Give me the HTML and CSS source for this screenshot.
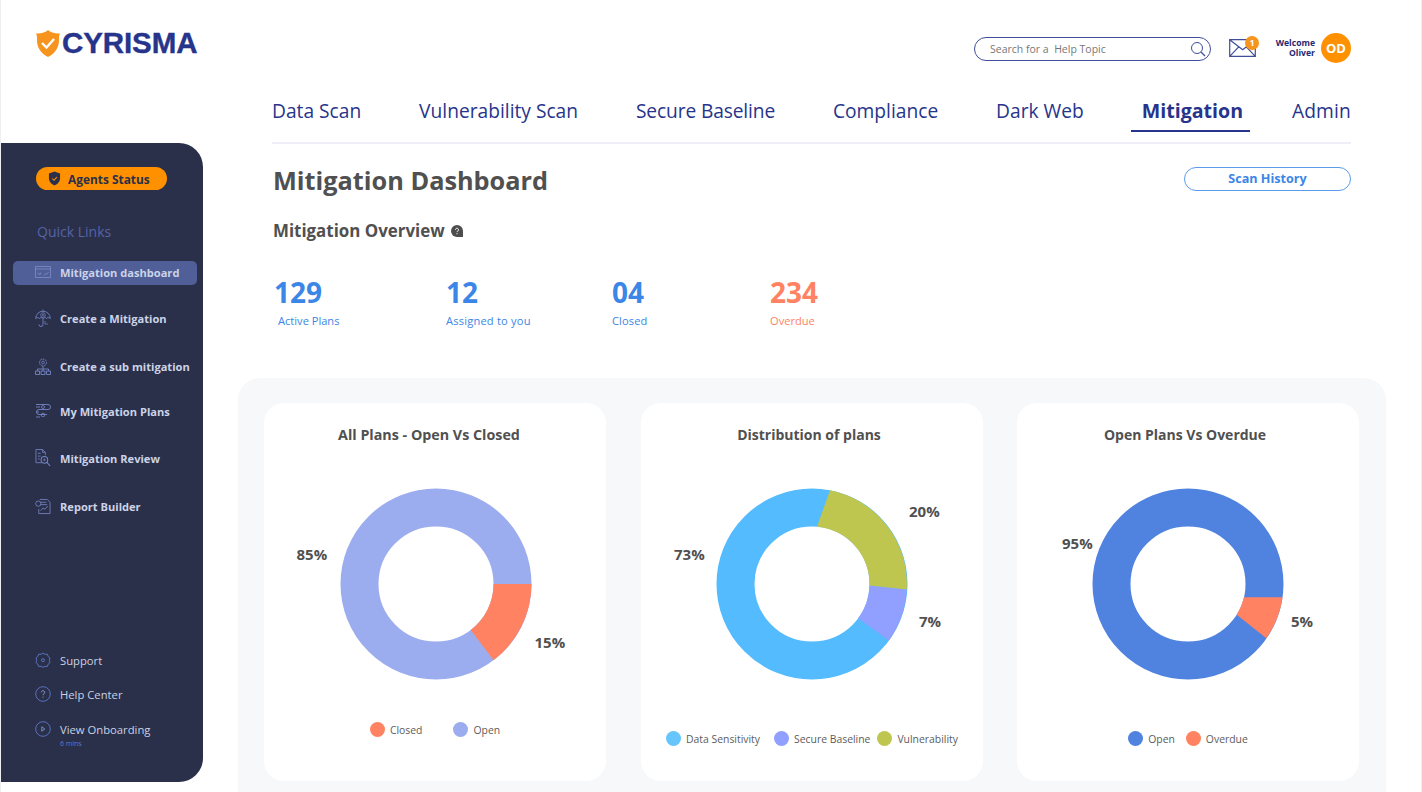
FILE: index.html
```html
<!DOCTYPE html>
<html lang="en">
<head>
<meta charset="utf-8">
<title>Mitigation Dashboard</title>
<link rel="stylesheet" href="styles.css">
</head>
<body>
<div class="page">
  <header class="top">
    <div class="logo">
      <svg class="shield" viewBox="0 0 24 27" width="24" height="27"><path d="M12 0c2.500 2.500 6.500 3.800 12 3.500-.8 1.500-1.200 3-1 5.500.4 8-3.500 14-11 18C4.500 23 .6 17 1 9c.2-2.500-.2-4-1-5.500C5.500 3.800 9.500 2.500 12 0z" fill="#f7941d"/><path d="M6 13l4.500 4.500L18 9" fill="none" stroke="#fff" stroke-width="2.400"/></svg>
      <span class="logo-text">CYRISMA</span>
    </div>
    <div class="top-right">
      <div class="search">
        <span>Search for a&nbsp; Help Topic</span>
        <svg viewBox="0 0 16 16" width="16" height="16"><circle cx="7" cy="7" r="5.500" fill="none" stroke="#3f4d9b" stroke-width="1"/><path d="M11 11l4 4" stroke="#3f4d9b" stroke-width="1.200"/></svg>
      </div>
      <div class="mail">
        <svg viewBox="0 0 27 18" width="27" height="18"><path d="M.7.7h25.600v16.600H.7zM.7.700l13 10 12.600-10M.7 17.300l9-9.500M26.300 17.300l-9-9.500" fill="none" stroke="#3f4d9b" stroke-width="1.200"/></svg>
        <span class="badge">1</span>
      </div>
      <div class="welcome">Welcome<br>Oliver</div>
      <div class="avatar">OD</div>
    </div>
  </header>
  <nav class="tabs">
    <a>Data Scan</a><a>Vulnerability Scan</a><a class="tight">Secure Baseline</a><a>Compliance</a><a>Dark Web</a><a class="active">Mitigation</a><a>Admin</a>
  </nav>
  <div class="body">
    <aside class="side">
      <div class="agents">
        <svg viewBox="0 0 14 16" width="13" height="15"><path d="M7 .5l6 2v5c0 4-2.500 6.500-6 8-3.500-1.500-6-4-6-8v-5z" fill="#2a3049"/><path d="M4.500 8l2 2 3-3.500" fill="none" stroke="#ff9100" stroke-width="1.100"/></svg>
        <span>Agents Status</span>
      </div>
      <div class="quick">Quick Links</div>
      <ul class="links">
        <li class="current l0"><svg viewBox="0 0 16 12" width="16" height="12"><path d="M.5.500h15v11H.5zM.5 3h15M3 7a1.500 1.500 0 1 0 3 0H4.500M9 9.500l1.500-2 1 1 2-2.500" fill="none" stroke="#7f8dc9" stroke-width=".8"/></svg><span>Mitigation dashboard</span></li>
        <li class="l1"><svg viewBox="0 0 16 20" width="16" height="20"><path d="M.7 10.500a7.300 7.300 0 0 1 14.600 0c-1.500-1.200-3-1.200-3.700 0-.9-1.200-2.700-1.200-3.600 0-.9-1.200-2.700-1.200-3.600 0-.7-1.200-2.200-1.200-3.700 0zM8 3.200V1.500M8 10.500v6a2 2 0 0 1-4 0" fill="none" stroke="#7584c4" stroke-width=".9"/><circle cx="8" cy="7" r="2.300" fill="none" stroke="#7584c4" stroke-width=".7"/><path d="M6.800 7h2.400M8 5.800v2.400M10 13v3h3" fill="none" stroke="#7584c4" stroke-width=".7"/></svg><span>Create a Mitigation</span></li>
        <li class="l2"><svg viewBox="0 0 16 17" width="16" height="17"><circle cx="8" cy="4.500" r="3.500" fill="none" stroke="#7584c4" stroke-width=".9" stroke-dasharray="2 .6"/><circle cx="8" cy="4.500" r="1.400" fill="none" stroke="#7584c4" stroke-width=".8"/><path d="M8 8v3M2.500 13v-2h11v2M.5 13h4v3.500h-4zM6 13h4v3.500H6zM11.500 13h4v3.500h-4zM8 11v2" fill="none" stroke="#7584c4" stroke-width=".9"/></svg><span>Create a sub mitigation</span></li>
        <li class="l3"><svg viewBox="0 0 16 16" width="16" height="16"><path d="M3 1.500h10a2.500 2.500 0 0 1 0 5H4a2.500 2.500 0 0 0 0 5h8M1 1.500h3M1 4h4M1 9h3M1 14h4" fill="none" stroke="#7584c4" stroke-width=".9"/><circle cx="8" cy="4" r="1.500" fill="none" stroke="#7584c4" stroke-width=".8"/><circle cx="8" cy="12" r="1.800" fill="none" stroke="#7584c4" stroke-width=".8"/></svg><span>My Mitigation Plans</span></li>
        <li class="l4"><svg viewBox="0 0 17 20" width="17" height="20"><path d="M7 15H1V1h7l3 3v3M8 1v3h3M3 5h3M3 8h3M3 11h2" fill="none" stroke="#7584c4" stroke-width=".9"/><circle cx="10" cy="12" r="3.500" fill="#2a3049" stroke="#7584c4" stroke-width="1.100"/><path d="M8.500 12h3M10 10.500v3" stroke="#7584c4" stroke-width=".7"/><path d="M12.500 14.500l3.500 4" stroke="#7584c4" stroke-width="1.200"/></svg><span>Mitigation Review</span></li>
        <li class="l5"><svg viewBox="0 0 17 17" width="17" height="17"><path d="M5 1h8l3 3v12H4v-5M6 4h6M6 6.500h7M6 13l2.500-3 2 1.500 3-3.500" fill="none" stroke="#7584c4" stroke-width=".9"/><circle cx="3.500" cy="5.500" r="2.800" fill="none" stroke="#7584c4" stroke-width=".9"/></svg><span>Report Builder</span></li>
      </ul>
      <ul class="foot">
        <li class="f0"><svg viewBox="0 0 16 16" width="16" height="16"><path d="M8 1l2 1.300 2.400-.1.800 2.300 1.800 1.500-.7 2.300.7 2.300-1.800 1.500-.8 2.300-2.400-.1L8 15.400l-2-1.100-2.400.1-.8-2.300L1 10.600l.7-2.300L1 6l1.800-1.500.8-2.300 2.400.1z" fill="none" stroke="#5f77c9" stroke-width=".9"/><circle cx="8" cy="8.200" r="1.500" fill="none" stroke="#5f77c9" stroke-width=".9"/></svg><span>Support</span></li>
        <li class="f1"><svg viewBox="0 0 16 16" width="16" height="16"><circle cx="8" cy="8" r="7.300" fill="none" stroke="#5f77c9" stroke-width=".9"/><path d="M6.300 6.300a1.700 1.700 0 1 1 2.600 1.500c-.6.400-.9.700-.9 1.400M8 10.700v1" fill="none" stroke="#8ea2e0" stroke-width=".9"/></svg><span>Help Center</span></li>
        <li class="f2"><svg viewBox="0 0 16 16" width="16" height="16"><circle cx="8" cy="8" r="7.300" fill="none" stroke="#5f77c9" stroke-width=".9"/><path d="M6.800 5.800l3 2.200-3 2.200z" fill="none" stroke="#8ea2e0" stroke-width=".8"/></svg><div><span>View Onboarding</span><small>6 mins</small></div></li>
      </ul>
    </aside>
    <main class="main">
      <div class="title-row">
        <h1>Mitigation Dashboard</h1>
        <button class="history">Scan History</button>
      </div>
      <h2>Mitigation Overview <svg viewBox="0 0 12 12" width="12" height="12"><path d="M6 0a6 6 0 0 1 6 6v6H6A6 6 0 0 1 6 0z" fill="#4d4d4d"/><path d="M4.500 4.700a1.500 1.500 0 1 1 2.300 1.300c-.5.300-.8.500-.8 1.100M6 8.200v1" fill="none" stroke="#fff" stroke-width="1"/></svg></h2>
      <div class="stats">
        <div class="stat s1"><b>129</b><span>Active Plans</span></div>
        <div class="stat s2"><b>12</b><span>Assigned to you</span></div>
        <div class="stat s3"><b>04</b><span>Closed</span></div>
        <div class="stat s4 over"><b>234</b><span>Overdue</span></div>
      </div>
      <section class="panel">
        <article class="card c1">
          <h3>All Plans - Open Vs Closed</h3>
          <div class="chart">
            <svg viewBox="0 0 192 192" width="192" height="192"><circle cx="96" cy="96" r="76.500" class="ring" stroke="#9cadef"/><circle cx="96" cy="96" r="76.500" class="ring" stroke="#ff8263" pathLength="100" stroke-dasharray="14.700 85.300"/></svg>
            <span class="pct p-a1">85%</span><span class="pct p-a2">15%</span>
          </div>
          <div class="legend lg-a"><i class="c-or"></i><span>Closed</span><i class="c-pe"></i><span>Open</span></div>
        </article>
        <article class="card c2">
          <h3>Distribution of plans</h3>
          <div class="chart">
            <svg viewBox="0 0 192 192" width="192" height="192"><circle cx="96" cy="96" r="76.500" class="ring" stroke="#54bbff"/><path d="M190.700 101.500A95.500 95.500 0 0 1 172.800 152.500L142.200 130.200A57.500 57.500 0 0 0 153.500 97.500Z" fill="#919ffe"/><path d="M114 2.200A95.500 95.500 0 0 1 190.700 101.500L153.500 97.500A57.500 57.500 0 0 0 101 38.700Z" fill="#bfc650"/></svg>
            <span class="pct p-b1">73%</span><span class="pct p-b2">20%</span><span class="pct p-b3">7%</span>
          </div>
          <div class="legend lg-b"><i class="c-sk"></i><span>Data Sensitivity</span><i class="c-vi"></i><span>Secure Baseline</span><i class="c-ol"></i><span>Vulnerability</span></div>
        </article>
        <article class="card c3">
          <h3>Open Plans Vs Overdue</h3>
          <div class="chart">
            <svg viewBox="0 0 192 192" width="192" height="192"><circle cx="96" cy="96" r="76.500" class="ring" stroke="#5083df"/><path d="M152 109.200H190.600A95.500 95.500 0 0 1 174.400 150.200L144.700 126.700A57.500 57.500 0 0 0 152 109.200Z" fill="#ff8263"/></svg>
            <span class="pct p-c1">95%</span><span class="pct p-c2">5%</span>
          </div>
          <div class="legend lg-c"><i class="c-bl"></i><span>Open</span><i class="c-or"></i><span>Overdue</span></div>
        </article>
      </section>
    </main>
  </div>
</div>
</body>
</html>
```
FILE: styles.css
```css
* { box-sizing: border-box; }
html, body { margin: 0; height: 792px; overflow: hidden; background: #fff; }
body { font-family: "Open Sans", "Noto Sans", sans-serif; color: #4d4d4d; }
.page { width: 1422px; height: 792px; position: relative; overflow: hidden; border-left: 1px solid #eceef2; border-right: 1px solid #eceef2; }
.top { height: 88px; display: flex; justify-content: space-between; padding: 30px 70px 0 35px; }
.logo { display: flex; align-items: flex-start; gap: 2px; }
.logo-text { font-family: "Liberation Sans", sans-serif; font-weight: 700; font-size: 29.500px; line-height: 26px; color: #27348b; letter-spacing: -.1px; -webkit-text-stroke: .4px #27348b; }
.top-right { display: flex; align-items: flex-start; margin-top: 3px; }
.search { width: 237px; height: 24px; margin-top: 4px; border: 1px solid #3f4d9b; border-radius: 12px; display: flex; justify-content: space-between; align-items: center; padding: 0 4px 0 15px; font-size: 10.500px; color: #777; }
.search span { white-space: nowrap; }
.mail { position: relative; margin: 6px 0 0 18px; height: 18px; }
.badge { position: absolute; left: 16px; top: -3px; width: 14px; height: 14px; border-radius: 50%; background: #f7941d; color: #fff; font-size: 9px; font-weight: 700; line-height: 14px; text-align: center; }
.welcome { margin: 5px 0 0 19px; width: 40px; font-size: 8.600px; line-height: 10px; font-weight: 700; text-align: right; color: #27276f; white-space: nowrap; }
.avatar { margin-left: 6px; width: 30px; height: 30px; border-radius: 50%; background: #ff9100; color: #fff; font-weight: 700; font-size: 13px; line-height: 30px; text-align: center; }
.tabs { position: absolute; left: 271px; top: 88px; width: 1079px; height: 56px; border-bottom: 2px solid #eeeff6; display: flex; justify-content: space-between; font-size: 19.200px; line-height: 46px; color: #27348b; }
.tabs a { display: block; height: 44px; white-space: nowrap; }
.tabs a.tight { letter-spacing: -.13px; }
.tabs a:last-child { letter-spacing: .15px; }
.tabs a.active { font-weight: 700; font-size: 19.600px; border-bottom: 2px solid #27348b; padding: 0 7px 0 11px; margin: 0 -16px 0 -11px; }
.body { display: flex; }
.side { width: 202px; height: 639px; margin-top: 55px; background: #2a3049; border-radius: 0 24px 24px 0; position: relative; padding-top: 24px; }
.agents { margin-left: 35px; width: 131px; height: 23px; border-radius: 12px; background: #ff9100; display: flex; align-items: center; gap: 7px; padding-left: 12px; color: #2a3049; font-size: 11.900px; font-weight: 700; }
.quick { margin: 32px 0 0 36px; font-size: 14px; line-height: 20px; color: #5563a8; }
.links { list-style: none; margin: 19px 0 0; padding: 0; }
.links li { display: flex; align-items: center; height: 24px; padding-left: 34px; gap: 9px; font-size: 11.100px; font-weight: 700; color: #ccd3e8; white-space: nowrap; }
.links svg { flex: none; width: 16px; }
.links li.current { width: 184px; margin-left: 12px; padding: 0 0 2px 22px; background: #505f98; border-radius: 5px; }
.l1 { margin-top: 21px; } .l2 { margin-top: 24px; } .l3 { margin-top: 21px; } .l4 { margin-top: 23px; } .l5 { margin-top: 24px; }
.foot { list-style: none; margin: 0; padding: 0; position: absolute; left: 34px; top: 508px; color: #c9d0e6; font-size: 11.250px; }
.foot li { display: flex; align-items: flex-start; gap: 9px; height: 20px; white-space: nowrap; line-height: 20px; }
.foot svg { margin-top: 1px; }
.f1 { margin-top: 14px; } .f2 { margin-top: 15px; }
.foot small { display: block; font-size: 7px; line-height: 7px; color: #5f77c9; }
.main { flex: 1; position: relative; }
.title-row { margin: 74px 70px 0 70px; display: flex; justify-content: space-between; align-items: flex-start; }
h1 { margin: 0; font-size: 25.300px; line-height: 36px; font-weight: 700; color: #505050; }
.history { width: 167px; height: 24px; margin-top: 5px; padding: 0 0 2px; background: #fff; border: 1px solid #5b9bec; border-radius: 13px; color: #3b86e6; font: 700 12.600px "Open Sans", sans-serif; }
h2 { margin: 22px 0 0 70px; font-size: 16.900px; line-height: 22px; font-weight: 700; color: #505050; display: flex; align-items: center; gap: 6px; }
.stats { margin: 33px 0 0 71px; display: flex; height: 55px; }
.stat { display: flex; flex-direction: column; color: #3b86e6; }
.stat b { font-size: 28px; line-height: 34px; }
.stat span { font-size: 11.100px; line-height: 22px; margin-top: 1px; white-space: nowrap; }
.s1 { width: 172px; } .s1 span { padding-left: 4px; }
.s2 { width: 166px; } .s2 span { letter-spacing: .2px; }
.s3 { width: 158px; } .s3 span { letter-spacing: .1px; }
.over { color: #ff8263; }
.panel { position: absolute; left: 35px; top: 290px; width: 1148px; height: 470px; background: #f7f8fa; border-radius: 22px; display: flex; gap: 34px; padding: 25px 26px; }
.card { width: 342px; height: 378px; flex: none; background: #fff; border-radius: 20px; position: relative; text-align: center; }
.c1 { margin-right: 1px; }
h3 { margin: 22px 0 0; padding-right: 6px; font-size: 14px; line-height: 20px; font-weight: 700; color: #505050; }
.c1 h3 { padding-right: 12px; font-size: 14.300px; }
.chart { position: relative; width: 192px; height: 192px; margin: 42.500px auto 0; }
.c1 .chart { margin-left: 75.500px; }
.ring { fill: none; stroke-width: 38px; }
.pct { position: absolute; font-size: 15px; font-weight: 700; line-height: 20px; color: #505050; }
.p-a1 { left: -43px; top: 56px; } .p-a2 { left: 195px; top: 144.500px; }
.p-b1 { left: -42px; top: 56px; } .p-b2 { left: 193px; top: 13.500px; } .p-b3 { left: 203px; top: 123.500px; }
.p-c1 { left: -30px; top: 45.500px; } .p-c2 { left: 199px; top: 123.500px; }
.legend { display: flex; justify-content: center; align-items: center; font-size: 10.400px; color: #5c5c5c; white-space: nowrap; }
.legend i { width: 15px; height: 15px; border-radius: 50%; margin-right: 5px; }
.legend span:last-child { margin-right: 0; }
.lg-a { margin-top: 42.500px; }
.lg-a span { margin-right: 31px; }
.lg-b, .lg-c { margin-top: 51.500px; }
.lg-b span { margin-right: 14px; }
.lg-b span:nth-of-type(2) { margin-right: 7px; }
.lg-c span { margin-right: 11px; }
.c-or { background: #ff8263; } .c-pe { background: #9cadef; } .c-sk { background: #66c6fb; } .c-vi { background: #919ffe; } .c-ol { background: #bfc650; } .c-bl { background: #5083df; }
```
